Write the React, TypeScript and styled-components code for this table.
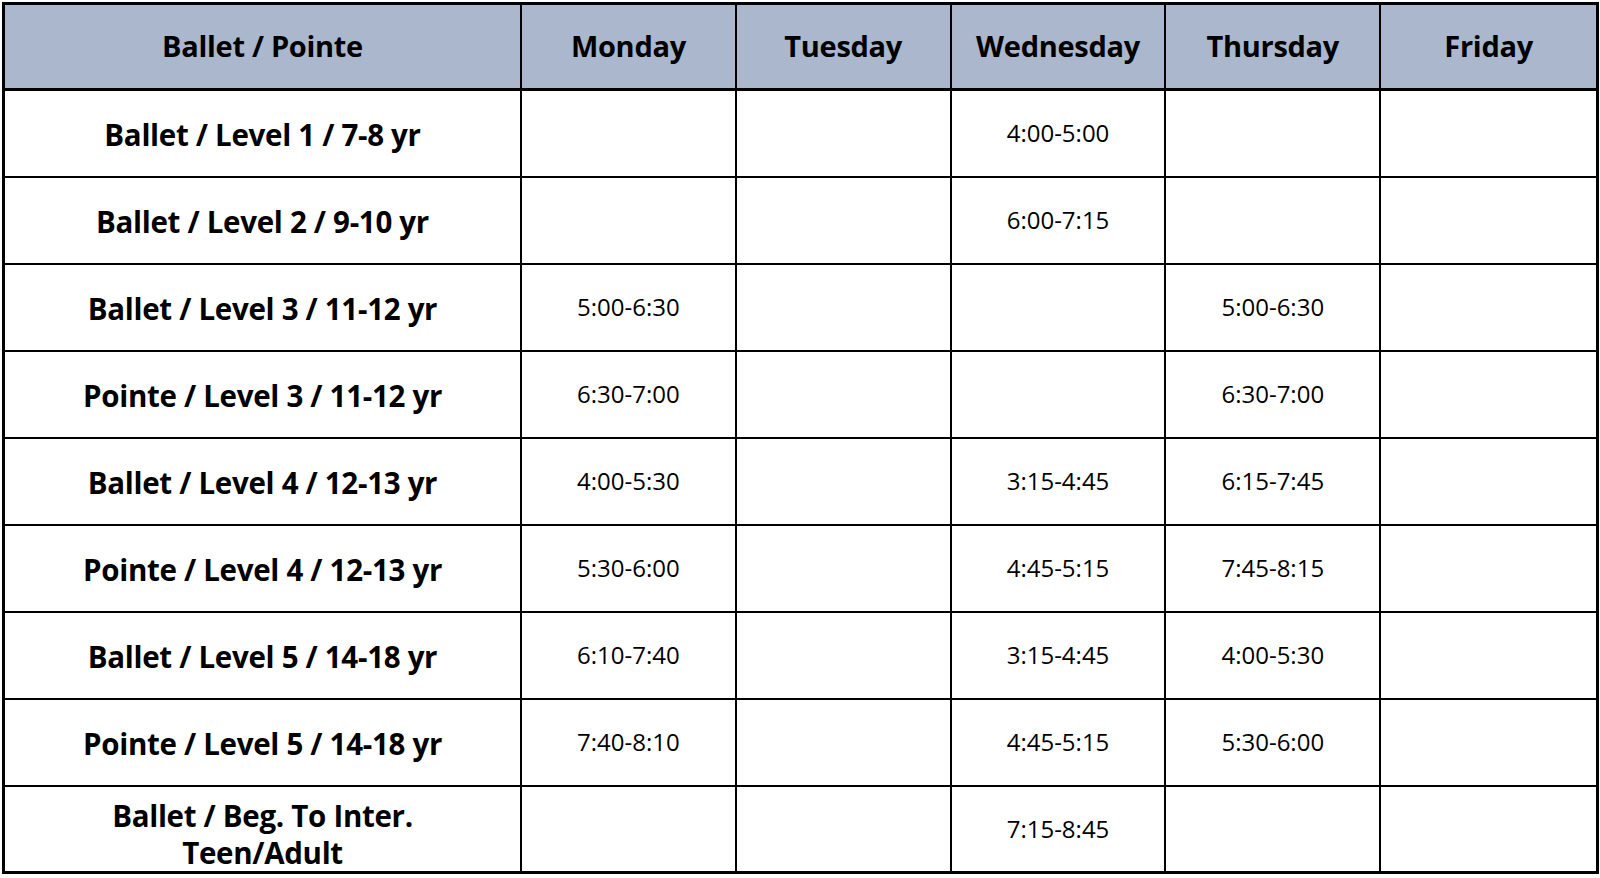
import { Fragment } from 'react';
import { createGlobalStyle, styled } from 'styled-components';

const GlobalStyle = createGlobalStyle`
  html, body {
    margin: 0;
    padding: 0;
    background: #ffffff;
  }
  body {
    font-family: "Open Sans", "Noto Sans", Arial, sans-serif;
    color: #000000;
  }
`;

const days = ['Monday', 'Tuesday', 'Wednesday', 'Thursday', 'Friday'];

type ClassRow = {
  name: string[];
  times: (string | null)[];
};

const rows: ClassRow[] = [
  { name: ['Ballet / Level 1 / 7-8 yr'], times: [null, null, '4:00-5:00', null, null] },
  { name: ['Ballet / Level 2 / 9-10 yr'], times: [null, null, '6:00-7:15', null, null] },
  { name: ['Ballet / Level 3 / 11-12 yr'], times: ['5:00-6:30', null, null, '5:00-6:30', null] },
  { name: ['Pointe / Level 3 / 11-12 yr'], times: ['6:30-7:00', null, null, '6:30-7:00', null] },
  { name: ['Ballet / Level 4 / 12-13 yr'], times: ['4:00-5:30', null, '3:15-4:45', '6:15-7:45', null] },
  { name: ['Pointe / Level 4 / 12-13 yr'], times: ['5:30-6:00', null, '4:45-5:15', '7:45-8:15', null] },
  { name: ['Ballet / Level 5 / 14-18 yr'], times: ['6:10-7:40', null, '3:15-4:45', '4:00-5:30', null] },
  { name: ['Pointe / Level 5 / 14-18 yr'], times: ['7:40-8:10', null, '4:45-5:15', '5:30-6:00', null] },
  { name: ['Ballet / Beg. To Inter.', 'Teen/Adult'], times: [null, null, '7:15-8:45', null, null] },
];

const Page = styled.div`
  padding: 2px 0 0 2px;
`;

const Schedule = styled.div`
  display: grid;
  grid-template-columns: 517px repeat(5, 1fr);
  grid-template-rows: 86px repeat(8, 87px) 84px;
  box-sizing: border-box;
  width: 1597px;
  border: 3px solid #000;
`;

const Cell = styled.div<{ $lastCol?: boolean; $lastRow?: boolean }>`
  display: flex;
  flex-direction: column;
  align-items: center;
  justify-content: center;
  box-sizing: border-box;
  border-right: ${({ $lastCol }) => ($lastCol ? 'none' : '2px solid #000')};
  border-bottom: ${({ $lastRow }) => ($lastRow ? 'none' : '2px solid #000')};
  text-align: center;
`;

const HeadCell = styled(Cell)`
  background: #aab7cc;
  border-bottom: 3px solid #000;
  font-size: 29px;
  font-weight: 700;
  letter-spacing: -0.3px;
  padding-bottom: 2px;
`;

const NameCell = styled(Cell)<{ $multiline?: boolean }>`
  font-size: 29.5px;
  font-weight: 700;
  letter-spacing: -0.3px;
  line-height: 37px;
  padding-top: ${({ $multiline }) => ($multiline ? '9px' : '1px')};
`;

const TimeCell = styled(Cell)`
  font-size: 24px;
  padding-bottom: 2px;
`;

const NameLine = styled.div`
  white-space: nowrap;
`;

export default function App() {
  return (
    <>
      <GlobalStyle />
      <Page>
        <Schedule>
          <HeadCell>Ballet / Pointe</HeadCell>
          {days.map((d, i) => (
            <HeadCell key={d} $lastCol={i === days.length - 1}>
              {d}
            </HeadCell>
          ))}
          {rows.map((r, ri) => {
            const lastRow = ri === rows.length - 1;
            return (
              <Fragment key={r.name.join(' ')}>
                <NameCell $lastRow={lastRow} $multiline={r.name.length > 1}>
                  {r.name.map((line) => (
                    <NameLine key={line}>{line}</NameLine>
                  ))}
                </NameCell>
                {r.times.map((t, i) => (
                  <TimeCell key={i} $lastRow={lastRow} $lastCol={i === r.times.length - 1}>
                    {t}
                  </TimeCell>
                ))}
              </Fragment>
            );
          })}
        </Schedule>
      </Page>
    </>
  );
}
